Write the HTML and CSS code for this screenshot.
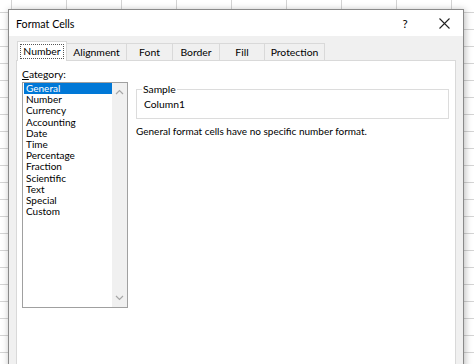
FILE: index.html
```html
<!DOCTYPE html>
<html>
<head>
<meta charset="utf-8">
<link rel="stylesheet" href="styles.css">
</head>
<body>
<div class="sheet">
  <div class="dialog">
    <div class="titlebar">
      <span class="title">Format Cells</span>
      <span class="help">?</span>
      <span class="close">
        <svg width="11" height="11" viewBox="0 0 11 11"><path d="M0.5 0.5 L10.5 10.5 M10.5 0.5 L0.5 10.5" stroke="#222" stroke-width="1.1" fill="none"/></svg>
      </span>
    </div>
    <div class="body">
      <div class="tabs">
        <div class="tab active"><span class="focus">Number</span></div>
        <div class="tab t-align">Alignment</div>
        <div class="tab t-font">Font</div>
        <div class="tab t-border">Border</div>
        <div class="tab t-fill">Fill</div>
        <div class="tab t-prot">Protection</div>
      </div>
      <div class="panel">
        <div class="leftcol">
          <div class="label"><u>C</u>ategory:</div>
          <div class="listbox">
            <ul class="items">
              <li class="sel">General</li>
              <li>Number</li>
              <li>Currency</li>
              <li>Accounting</li>
              <li>Date</li>
              <li>Time</li>
              <li>Percentage</li>
              <li>Fraction</li>
              <li>Scientific</li>
              <li>Text</li>
              <li>Special</li>
              <li>Custom</li>
            </ul>
            <div class="scrollbar">
              <svg class="arrow" width="9" height="6" viewBox="0 0 9 6"><path d="M1 5 L4.5 1.5 L8 5" stroke="#a6a6a6" stroke-width="1.2" fill="none"/></svg>
              <svg class="arrow" width="9" height="6" viewBox="0 0 9 6"><path d="M1 1 L4.5 4.5 L8 1" stroke="#a6a6a6" stroke-width="1.2" fill="none"/></svg>
            </div>
          </div>
        </div>
        <div class="rightcol">
          <fieldset class="group">
            <legend>Sample</legend>
            <div class="value">Column1</div>
          </fieldset>
          <div class="desc">General format cells have no specific number format.</div>
        </div>
      </div>
    </div>
  </div>
</div>
</body>
</html>
```
FILE: styles.css
```css
html, body {
  margin: 0;
  padding: 0;
}
body {
  width: 474px;
  height: 364px;
  overflow: hidden;
  font-family: Lato, "Noto Sans", sans-serif;
  color: #000;
}
.sheet {
  width: 474px;
  height: 364px;
  overflow: hidden;
  padding: 9px 0 0 8px;
  box-sizing: border-box;
  background-color: #fff;
  background-image:
    repeating-linear-gradient(to right, transparent 0, transparent 11px, #d4d4d4 11px, #d4d4d4 12px, transparent 12px, transparent 55px),
    repeating-linear-gradient(to bottom, transparent 0, transparent 12px, #d4d4d4 12px, #d4d4d4 13px, transparent 13px, transparent 17px);
  background-size: 55px 100%, 100% 17px;
}
.dialog {
  width: 456px;
  height: 420px;
  box-sizing: border-box;
  border: 1px solid #8a8a8a;
  background: #f0f0f0;
  box-shadow: 1px 1px 7px rgba(0,0,0,0.28);
  display: flex;
  flex-direction: column;
}
.titlebar {
  height: 26px;
  background: #fff;
  display: flex;
  align-items: center;
  padding-left: 7px;
  font-size: 10.7px;
}
.title {
  flex: 1;
}
.help {
  width: 14px;
  font-size: 11.5px;
  text-align: center;
  margin-right: 25px;
}
.close {
  width: 14px;
  display: flex;
  justify-content: center;
  margin-right: 12px;
}
.close svg {
  display: block;
}
.body {
  flex: 1;
  padding: 6px 7px 0 7px;
  display: flex;
  flex-direction: column;
}
.tabs {
  display: flex;
  height: 18px;
  align-items: flex-end;
  padding-left: 1px;
  position: relative;
  z-index: 1;
}
.tab {
  height: 17px;
  box-sizing: border-box;
  border: 1px solid #d9d9d9;
  border-bottom: none;
  margin-left: -1px;
  background: #f0f0f0;
  font-size: 10.4px;
  display: flex;
  align-items: center;
  justify-content: center;
}
.tab.active {
  height: 20px;
  margin-bottom: -1px;
  background: #fff;
  width: 50px;
  margin-left: 0;
}
.focus {
  border: 1px dotted #555;
  padding: 0 2px;
  line-height: 13px;
}
.t-align { width: 61px; }
.t-font { width: 47px; }
.t-border { width: 48px; }
.t-fill { width: 46px; }
.t-prot { width: 61px; }
.panel {
  flex: 1;
  background: #fff;
  border: 1px solid #d9d9d9;
  display: flex;
  gap: 8px;
  padding: 6px 6px 0 5px;
  font-size: 10.3px;
}
.leftcol {
  width: 106px;
  display: flex;
  flex-direction: column;
}
.label {
  height: 15px;
  line-height: 14px;
}
.label u {
  text-decoration-thickness: 1px;
  text-underline-offset: 1px;
}
.listbox {
  height: 226px;
  box-sizing: border-box;
  border: 1px solid #a0a0a0;
  display: flex;
  padding: 0 0 0 1px;
}
.items {
  list-style: none;
  margin: 0;
  padding: 0;
  flex: 1;
  font-size: 10px;
}
.items li {
  height: 11.2px;
  line-height: 11.2px;
  padding-left: 2px;
  white-space: nowrap;
}
.items li.sel {
  background: #0078d7;
  color: #fff;
}
.scrollbar {
  width: 15px;
  background: #f0f0f0;
  display: flex;
  flex-direction: column;
  justify-content: space-between;
  align-items: center;
  padding: 6px 0 6px;
}
.arrow {
  display: block;
}
.rightcol {
  flex: 1;
  padding-top: 16px;
}
.group {
  margin: 0;
  border: 1px solid #dcdcdc;
  padding: 0 4px 3px 4px;
  height: 36px;
  box-sizing: border-box;
}
.group legend {
  padding: 0 1px;
  line-height: 13px;
  margin-left: 1px;
}
.value {
  padding-left: 3px;
  line-height: 16px;
}
.desc {
  margin-top: 6px;
  line-height: 13px;
  font-size: 10px;
}
```
